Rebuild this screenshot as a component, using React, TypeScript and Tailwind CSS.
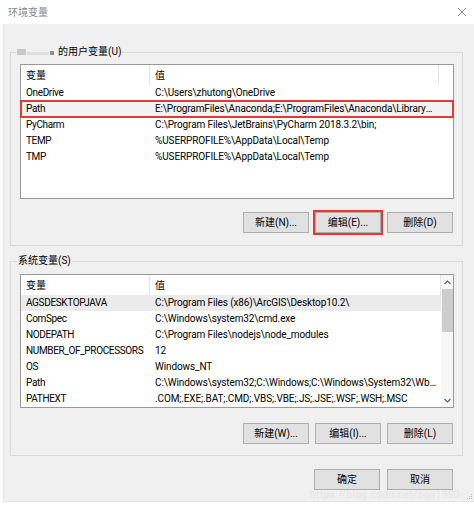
const FONT = "font-['Roboto','Noto_Sans_CJK_SC',sans-serif]";

type Row = { name: string; value: string };

const USER_VARS: Row[] = [
  { name: "OneDrive", value: "C:\\Users\\zhutong\\OneDrive" },
  {
    name: "Path",
    value:
      "E:\\ProgramFiles\\Anaconda;E:\\ProgramFiles\\Anaconda\\Library\\mingw-w64\\bin;E:\\ProgramFiles\\Anaconda\\Scripts",
  },
  { name: "PyCharm", value: "C:\\Program Files\\JetBrains\\PyCharm 2018.3.2\\bin;" },
  { name: "TEMP", value: "%USERPROFILE%\\AppData\\Local\\Temp" },
  { name: "TMP", value: "%USERPROFILE%\\AppData\\Local\\Temp" },
];

const SYSTEM_VARS: Row[] = [
  { name: "AGSDESKTOPJAVA", value: "C:\\Program Files (x86)\\ArcGIS\\Desktop10.2\\" },
  { name: "ComSpec", value: "C:\\Windows\\system32\\cmd.exe" },
  { name: "NODEPATH", value: "C:\\Program Files\\nodejs\\node_modules" },
  { name: "NUMBER_OF_PROCESSORS", value: "12" },
  { name: "OS", value: "Windows_NT" },
  {
    name: "Path",
    value:
      "C:\\Windows\\system32;C:\\Windows;C:\\Windows\\System32\\Wbem;C:\\Windows\\System32\\WindowsPowerShell\\v1.0\\",
  },
  { name: "PATHEXT", value: ".COM;.EXE;.BAT;.CMD;.VBS;.VBE;.JS;.JSE;.WSF;.WSH;.MSC" },
];

function WinButton({ label, marked = false }: { label: string; marked?: boolean }) {
  return (
    <button
      className={`flex h-[21px] w-[66px] items-center justify-center border border-[#adadad] bg-[#e1e1e1] text-[10px] text-black ${
        marked ? "outline-2 outline-offset-0 outline-[#e53935]" : ""
      }`}
    >
      {label}
    </button>
  );
}

function HeaderRow({ valueWidth }: { valueWidth: string }) {
  return (
    <div className="flex h-[20px] shrink-0 bg-white">
      <div className="flex w-[129px] items-center border-r border-[#e5e5e5] pl-[5px]">变量</div>
      <div className={`flex ${valueWidth} items-center border-r border-[#e5e5e5] pl-[5px]`}>值</div>
    </div>
  );
}

function DataRow({
  row,
  valueWidth,
  marked,
  selected,
}: {
  row: Row;
  valueWidth: string;
  marked?: boolean;
  selected?: boolean;
}) {
  return (
    <div
      className={`flex h-[16px] shrink-0 leading-[16px] ${
        marked ? "bg-[#f2f2f2] outline-2 -outline-offset-1 outline-[#e53935]" : ""
      } ${selected ? "bg-[#ebebeb]" : ""}`}
    >
      <div className="w-[129px] overflow-hidden whitespace-nowrap pl-[5px] tracking-[-0.35px]">{row.name}</div>
      <div className={`${valueWidth} truncate pl-[5px] pr-[3px] tracking-[-0.12px]`}>{row.value}</div>
    </div>
  );
}

function Chevron({ up }: { up?: boolean }) {
  return (
    <svg width="7" height="5" viewBox="0 0 7 5" className="shrink-0">
      <polyline
        points={up ? "0.5,4 3.5,1 6.5,4" : "0.5,1 3.5,4 6.5,1"}
        fill="none"
        stroke="#606060"
        strokeWidth="1.1"
      />
    </svg>
  );
}

export default function App() {
  return (
    <div className={`flex h-[505px] w-[474px] flex-col overflow-hidden bg-white text-[10px] text-black ${FONT}`}>
      {/* title bar */}
      <div className="flex h-[24px] shrink-0 items-center justify-between bg-white pl-[8px] pr-[7px]">
        <span className="text-[10px] text-[#8a8a8a]">环境变量</span>
        <svg width="10" height="10" viewBox="0 0 10 10">
          <path d="M1 1 L9 9 M9 1 L1 9" stroke="#7a7a7a" strokeWidth="0.9" />
        </svg>
      </div>

      {/* body */}
      <div className="relative ml-[3px] mb-[3px] flex flex-1 flex-col border-l border-b border-[#e4e4e4] bg-[#f0f0f0] pt-[20px]">
        <fieldset className="ml-[6px] mr-[11px] border border-[#d9d9d9] pl-[9px] pr-[8px] pb-[12px] pt-[4px]">
          <legend className="ml-[-4px] flex h-[16px] items-center px-[1px] leading-[16px]">
            <span className="mr-[1px] h-[6px] w-[9px] bg-[#c9c9c9]" />
            <span className="mr-[1px] mt-[2px] h-[3px] w-[22px] bg-[#dedede]" />
            <span className="mr-[4px] mt-[2px] h-[4px] w-[4px] bg-[#8e8e8e]" />
            的用户变量(U)
          </legend>
          <div className="flex h-[135px] w-[434px] flex-col border border-[#999] bg-white">
            <HeaderRow valueWidth="w-[289px]" />
            {USER_VARS.map((r) => (
              <DataRow key={r.name} row={r} valueWidth="w-[289px]" marked={r.name === "Path"} />
            ))}
          </div>
          <div className="mt-[13px] flex justify-end gap-[6px] pr-[1px]">
            <WinButton label="新建(N)..." />
            <WinButton label="编辑(E)..." marked />
            <WinButton label="删除(D)" />
          </div>
        </fieldset>

        <fieldset className="mt-[7px] ml-[6px] mr-[11px] border border-[#d9d9d9] pl-[9px] pr-[8px] pb-[11px] pt-[5px]">
          <legend className="ml-[-3px] h-[16px] px-[1px] leading-[16px]">系统变量(S)</legend>
          <div className="flex h-[134px] w-[434px] border border-[#999] bg-white">
            <div className="flex w-[420px] flex-col">
              <HeaderRow valueWidth="w-[291px]" />
              {SYSTEM_VARS.map((r) => (
                <DataRow
                  key={r.name}
                  row={r}
                  valueWidth="w-[291px]"
                  selected={r.name === "AGSDESKTOPJAVA"}
                />
              ))}
            </div>
            <div className="flex w-[12px] flex-col items-center bg-[#f7f7f7]">
              <div className="flex h-[14px] items-center justify-center">
                <Chevron up />
              </div>
              <div className="h-[43px] w-[11px] bg-[#cdcdcd]" />
              <div className="flex-1" />
              <div className="flex h-[14px] items-center justify-center">
                <Chevron />
              </div>
            </div>
          </div>
          <div className="mt-[15px] flex justify-end gap-[6px] pr-[1px]">
            <WinButton label="新建(W)..." />
            <WinButton label="编辑(I)..." />
            <WinButton label="删除(L)" />
          </div>
        </fieldset>

        <div className="mt-[13px] flex justify-end gap-[7px] pr-[21px]">
          <WinButton label="确定" />
          <WinButton label="取消" />
        </div>

        {/* watermark */}
        <span className="absolute bottom-[0px] right-[14px] text-[10px] leading-[12px] tracking-[0.5px] text-[#e4e4e4]">
          https://blog.csdn.net/zqq1990
        </span>
        {/* size grip */}
        <svg width="6" height="6" viewBox="0 0 6 6" className="absolute bottom-[1px] right-[1px]">
          <rect x="4" y="0" width="1" height="1" fill="#b5b5b5" />
          <rect x="2" y="2" width="1" height="1" fill="#b5b5b5" />
          <rect x="4" y="2" width="1" height="1" fill="#b5b5b5" />
          <rect x="0" y="4" width="1" height="1" fill="#b5b5b5" />
          <rect x="2" y="4" width="1" height="1" fill="#b5b5b5" />
          <rect x="4" y="4" width="1" height="1" fill="#b5b5b5" />
        </svg>
      </div>
    </div>
  );
}
